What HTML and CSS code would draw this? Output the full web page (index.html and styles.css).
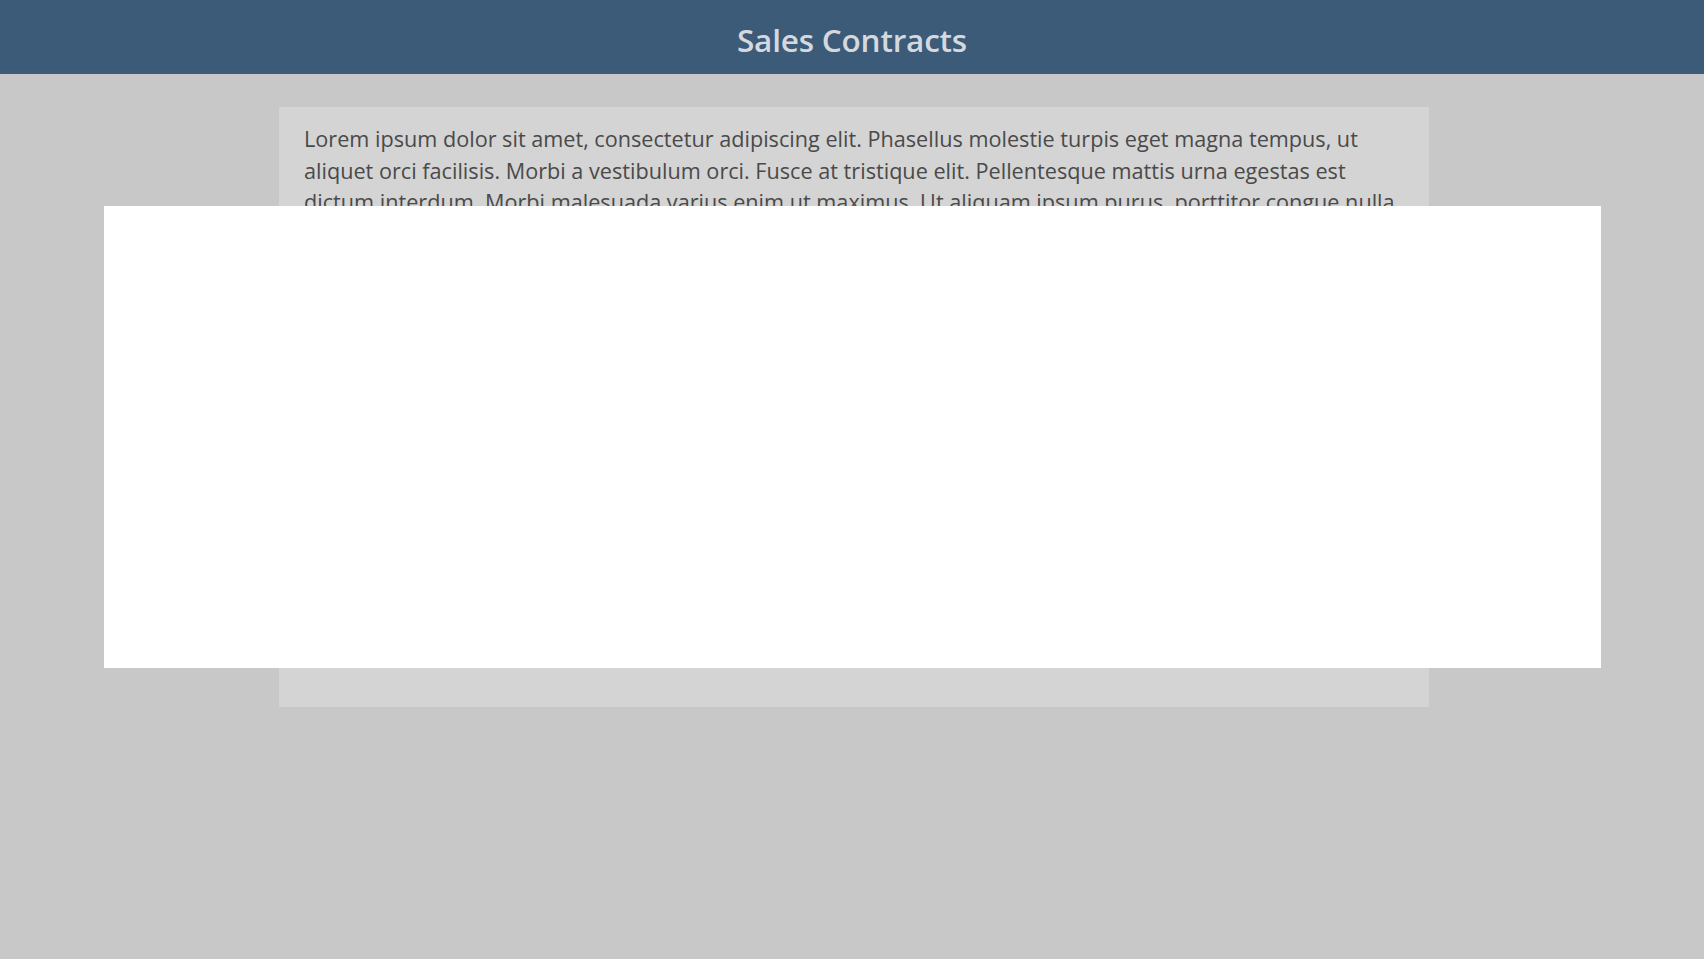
FILE: index.html
```html
<!DOCTYPE html>
<html lang="en">
<head>
<meta charset="utf-8">
<title>Sales Contracts</title>
<link rel="stylesheet" href="styles.css">
</head>
<body>
<header class="topbar">
  <h1 class="title">Sales Contracts</h1>
</header>
<main class="main">
  <section class="card">
    <p class="text">Lorem ipsum dolor sit amet, consectetur adipiscing elit. Phasellus molestie turpis eget magna tempus, ut aliquet orci facilisis. Morbi a vestibulum orci. Fusce at tristique elit. Pellentesque mattis urna egestas est dictum interdum. Morbi malesuada varius enim ut maximus. Ut aliquam ipsum purus, porttitor congue nulla rhoncus at. Donec vitae lacus vel tellus placerat facilisis. Integer suscipit elit eget felis tincidunt, a condimentum ante finibus. Vivamus ut neque vel nulla mattis laoreet. Sed id sodales lacus, non rutrum metus. Curabitur vitae sem at tortor elementum aliquam. Nullam gravida purus ac mauris porta, vel vulputate ipsum tempus. Aenean sit amet lectus sed nisl feugiat sodales. Proin porttitor nunc eu mauris euismod, nec tincidunt lorem fermentum.</p>
  </section>
</main>
<div class="overlay"></div>
</body>
</html>
```

FILE: styles.css
```css
html, body {
  margin: 0;
  padding: 0;
}
body {
  background: #c8c8c8;
  font-family: "Open Sans", "Noto Sans", sans-serif;
  min-height: 959px;
  position: relative;
}
.topbar {
  height: 74px;
  background: #3c5b79;
  display: flex;
  align-items: center;
  justify-content: center;
}
.title {
  margin: 0;
  font-family: "Open Sans", sans-serif;
  font-weight: 600;
  font-size: 31.5px;
  color: #d5d9de;
  letter-spacing: -0.2px;
  padding-top: 4px;
}
.main {
  display: flex;
  justify-content: center;
  padding-top: 33px;
}
.card {
  width: 1150px;
  height: 600px;
  box-sizing: border-box;
  background: #d4d4d4;
  padding: 16px 25px 25px 25px;
  overflow: hidden;
  margin-left: 4px;
}
.text {
  margin: 0;
  font-size: 21.65px;
  line-height: 31.5px;
  color: #4a4a4a;
}
.overlay {
  position: absolute;
  left: 104px;
  top: 206px;
  width: 1497px;
  height: 462px;
  background: #ffffff;
}
```
